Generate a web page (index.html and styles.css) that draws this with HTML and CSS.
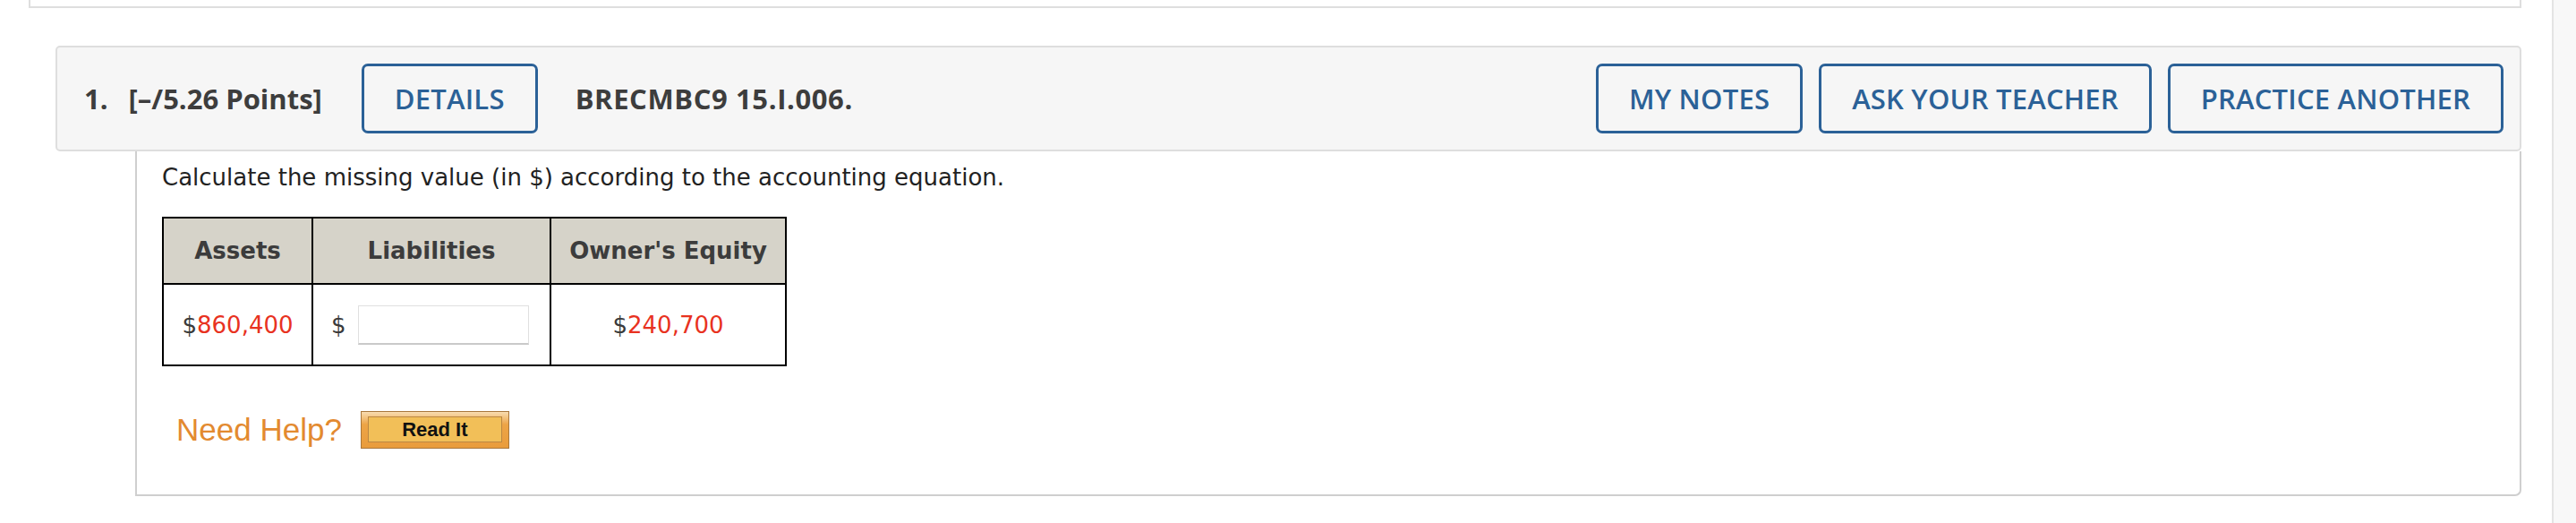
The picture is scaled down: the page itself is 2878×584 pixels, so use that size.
FILE: index.html
```html
<!DOCTYPE html>
<html lang="en">
<head>
<meta charset="utf-8">
<title>Question 1</title>
<link rel="stylesheet" href="styles.css">
</head>
<body>
<div class="page">
  <div class="main">
    <div class="prev-box"></div>
    <section class="question">
      <header class="qhead">
        <span class="qnum">1.</span>
        <span class="qpoints">[–/5.26 Points]</span>
        <button class="btn">DETAILS</button>
        <span class="qcode">BRECMBC9 15.I.006.</span>
        <div class="actions">
          <button class="btn">MY NOTES</button>
          <button class="btn">ASK YOUR TEACHER</button>
          <button class="btn">PRACTICE ANOTHER</button>
        </div>
      </header>
      <div class="qbody">
        <p class="prompt">Calculate the missing value (in $) according to the accounting equation.</p>
        <table class="eq">
          <thead>
            <tr>
              <th class="c1">Assets</th>
              <th class="c2">Liabilities</th>
              <th class="c3">Owner's Equity</th>
            </tr>
          </thead>
          <tbody>
            <tr>
              <td class="center">$<span class="red">860,400</span></td>
              <td class="left"><span class="dollar">$</span><input class="ans" type="text"></td>
              <td class="center">$<span class="red">240,700</span></td>
            </tr>
          </tbody>
        </table>
        <div class="help">
          <span class="need">Need Help?</span>
          <span class="readit"><span class="readit-inner">Read It</span></span>
        </div>
      </div>
    </section>
  </div>
  <div class="rail"></div>
</div>
</body>
</html>
```
FILE: styles.css
```css
html, body {
  margin: 0;
  padding: 0;
  background: #ffffff;
}
.page {
  display: flex;
  min-height: 584px;
}
.main {
  flex: 1;
  padding: 0 34px 0 32px;
}
.rail {
  width: 25px;
  border-left: 2px solid #e4e4e4;
  background: #f8f8f8;
}
.prev-box {
  height: 7px;
  border: 2px solid #dedede;
  border-top: none;
}
.question {
  margin: 42px 0 0 30px;
}
.qhead {
  display: flex;
  align-items: center;
  box-sizing: border-box;
  height: 118px;
  padding: 0 18px 0 30px;
  border: 2px solid #dedede;
  border-radius: 5px;
  background: #f6f6f6;
  font-family: "Open Sans", sans-serif;
  font-size: 31px;
  color: #3d3d3d;
}
.qnum {
  font-weight: 700;
  margin-right: 23px;
}
.qpoints {
  font-weight: 700;
  margin-right: 44px;
}
.qcode {
  font-weight: 700;
  letter-spacing: 0.6px;
  margin-left: 42px;
}
.btn {
  box-sizing: border-box;
  height: 78px;
  padding: 0 34px;
  border: 3px solid #2b6197;
  border-radius: 7px;
  background: transparent;
  color: #2b6197;
  font-family: "Open Sans", sans-serif;
  font-size: 31px;
  font-weight: 600;
  letter-spacing: 0.2px;
  display: flex;
  align-items: center;
}
.actions {
  display: flex;
  gap: 18px;
  margin-left: auto;
}
.qbody {
  margin-left: 89px;
  border: 2px solid #cfcfcf;
  border-top: none;
  border-radius: 0 0 7px 0;
  padding: 15px 28px 51px 28px;
  font-family: "DejaVu Sans", Verdana, sans-serif;
  color: #222222;
}
.prompt {
  margin: 0 0 29px 0;
  font-size: 26px;
  line-height: 29px;
}
.eq {
  border-collapse: collapse;
  border: 2px solid #000000;
  font-size: 26px;
}
.eq th, .eq td {
  border: 2px solid #000000;
  padding: 0 20px;
}
.eq th {
  background: #d6d3c9;
  color: #3c3c3c;
  font-weight: 700;
  height: 72px;
  text-align: center;
}
.eq td {
  height: 89px;
  color: #3a3a3a;
}
.c1 { width: 125px; }
.c2 { width: 224px; }
.c3 { width: 221px; }
.center { text-align: center; }
.left { text-align: left; }
.red { color: #e8321f; }
.dollar {
  margin-right: 13px;
  vertical-align: middle;
}
.ans {
  box-sizing: border-box;
  width: 191px;
  height: 44px;
  border: 1px solid #e0e0e0;
  border-bottom: 2px solid #c9c9c9;
  vertical-align: middle;
  background: #ffffff;
}
.help {
  display: flex;
  align-items: center;
  margin: 50px 0 0 16px;
}
.need {
  font-family: "Liberation Sans", Arial, sans-serif;
  font-size: 35px;
  color: #e38a30;
  margin-right: 21px;
}
.readit {
  box-sizing: border-box;
  width: 166px;
  height: 42px;
  padding: 5px 7px 6px 7px;
  border: 1px solid #a9773b;
  background: linear-gradient(#f8dcb0 0%, #eda446 35%, #e99c3c 100%);
  display: flex;
}
.readit-inner {
  flex: 1;
  display: flex;
  align-items: center;
  justify-content: center;
  border: 1px solid #bb8743;
  background: #f2bf58;
  font-family: "Liberation Sans", Arial, sans-serif;
  font-weight: 700;
  font-size: 22px;
  color: #111111;
}
```
